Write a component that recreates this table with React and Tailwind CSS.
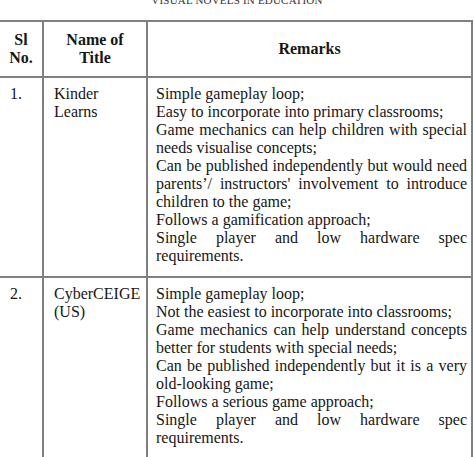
import React from "react";

const rows = [
  {
    no: "1.",
    title: ["Kinder", "Learns"],
    remarks: [
      "Simple gameplay loop;",
      "Easy to incorporate into primary classrooms;",
      "Game mechanics can help children with special needs visualise concepts;",
      "Can be published independently but would need parents\u2019/ instructors' involvement to introduce children to the game;",
      "Follows a gamification approach;",
      "Single player and low hardware spec requirements.",
    ],
  },
  {
    no: "2.",
    title: ["CyberCEIGE", "(US)"],
    remarks: [
      "Simple gameplay loop;",
      "Not the easiest to incorporate into classrooms;",
      "Game mechanics can help understand concepts better for students with special needs;",
      "Can be published independently but it is a very old-looking game;",
      "Follows a serious game approach;",
      "Single player and low hardware spec requirements.",
    ],
  },
];

export default function App() {
  return (
    <div className="w-[474px] h-[457px] overflow-hidden bg-white text-[#161616] font-['Liberation_Serif','Times_New_Roman',serif]">
      <div className="h-[20px] overflow-hidden">
        <div className="-mt-[6px] text-center text-[11px] leading-[12px] text-[#333] tracking-[0.2px]">
          VISUAL NOVELS IN EDUCATION
        </div>
      </div>
      <table className="-ml-[2px] w-[475px] border-collapse table-fixed text-[16px] leading-[18px] font-['Liberation_Serif','Times_New_Roman',serif]">
        <colgroup>
          <col className="w-[44px]" />
          <col className="w-[104px]" />
          <col />
        </colgroup>
        <thead>
          <tr className="h-[56px]">
            <th className="border-2 border-[#808080] text-center font-bold align-middle">
              Sl
              <br />
              No.
            </th>
            <th className="border-2 border-[#808080] text-center font-bold align-middle">
              Name of
              <br />
              Title
            </th>
            <th className="border-2 border-[#808080] text-center font-bold align-middle">
              Remarks
            </th>
          </tr>
        </thead>
        <tbody>
          {rows.map((r, i) => (
            <tr key={r.no} className={i === 0 ? "h-[200px]" : "h-[181px]"}>
              <td className="border-2 border-[#808080] align-top pl-[10px] pt-[7px]">{r.no}</td>
              <td className="border-2 border-[#808080] align-top pl-[10px] pt-[7px]">
                {r.title[0]}
                <br />
                {r.title[1]}
              </td>
              <td className="border-2 border-[#808080] align-top pl-[8px] pr-[4px] pt-[7px]">
                {r.remarks.map((t) => (
                  <p key={t} className="text-justify">
                    {t}
                  </p>
                ))}
              </td>
            </tr>
          ))}
        </tbody>
      </table>
    </div>
  );
}
